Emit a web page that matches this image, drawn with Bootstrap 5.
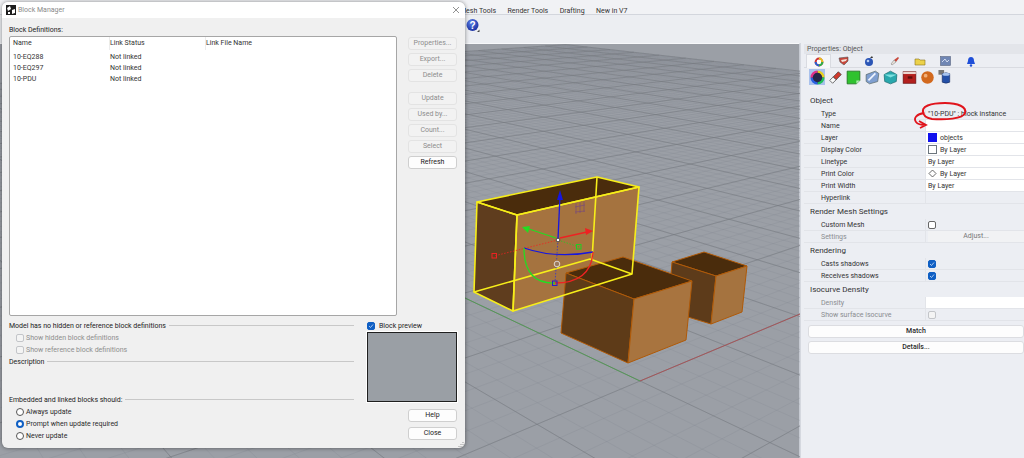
<!DOCTYPE html>
<html lang="en">
<head>
    <meta charset="UTF-8">
    <meta name="viewport" content="width=device-width, initial-scale=1.0">
    <title>Block Manager</title>
    <link href="https://cdn.jsdelivr.net/npm/bootstrap@5.3.2/dist/css/bootstrap.min.css" rel="stylesheet">
    <style>
        html, body { width: 1024px; height: 458px; overflow: hidden; }
        body { background: #eceef2; font-family: Roboto, "Noto Sans", sans-serif; font-size: 7px; line-height: 12px; color: #2b2b2b; position: relative; }

        /* top ribbon */
        .top-strip { height: 43px; background: #eceef2; }
        .tab-line { height: 15px; border-bottom: 1px solid #d3d6dd; padding-left: 460px; gap: 11.5px; background: #f1f2f5; }
        .tab-line span { line-height: 23px; color: #333; white-space: nowrap; }
        .help-row { padding: 3px 0 0 466px; }

        /* main area */
        .main-row { height: 415px; }
        .view-port { width: 800px; background: #9b9fa6; border-top: 1px solid #f7f8fa; border-right: 1px solid #c6cad2; }
        .view-port svg { width: 800px; height: 414px; }

        /* properties panel */
        .prop-panel { width: 224px; padding: 1px 0 0 3px; border-left: 1px solid #d5d8df; background: #eceef3; }
        .prop-title { height: 10px; line-height: 10px; padding-left: 3px; color: #555; background: #e3e5ea; }
        .prop-tabs { height: 14px; border-bottom: 1px solid #d9dbe1; padding-left: 2px; }
        .prop-tabs > div { width: 25.4px; height: 14px; display: flex; align-items: center; justify-content: center; }
        .prop-tabs > div.on { background: #f6f7f9; border: 1px solid #d9dbe1; border-bottom: 0; }
        .prop-icons { height: 25px; gap: 2px; padding: 1px 0 0 5px; align-items: flex-start; }
        .prop-icons > div { width: 16.4px; height: 16px; display: flex; align-items: center; justify-content: center; }
        .prop-icons > div.on { background: #a9c1ec; }
        .prop-icons svg { width: 15px; height: 15px; }
        .prop-head { height: 15px; line-height: 15px; padding-left: 6px; font-size: 8px; color: #333; }
        .prop-row { height: 12px; line-height: 12px; border-bottom: 1px solid #e2e4e9; padding-left: 17px; color: #333; }
        .prop-row .lbl { width: 105px; flex: none; border-right: 1px solid #e2e4e9; }
        .prop-row .val { flex: 1; padding-left: 2px; white-space: nowrap; display: flex; align-items: center; gap: 3px; }
        .val-white { background: #fff; }
        .prop-row.dim { color: #8b8d91; }
        .swatch { width: 9px; height: 9px; flex: none; }
        .adjust-btn { background: #f1f2f4; color: #777; text-align: center; height: 11px; line-height: 11px; }
        .chk { width: 8px; height: 8px; flex: none; border: 1px solid #666; border-radius: 2px; background: #fff; display: inline-flex; align-items: center; justify-content: center; }
        .chk.blue { background: #0f5fc4; border-color: #0f5fc4; }
        .chk.off { border-color: #c3c5c9; background: #f4f4f4; }
        .wide-btn { height: 13px; padding: 0; font-size: 7px; line-height: 11px; font-weight: 500; color: #2b2b2b; background: #fdfdfd; border: 1px solid #dcdde1; border-radius: 3px; width: 100%; display: block; }
        .btn-stack { padding: 4px 0 0 4px; gap: 3px; }

        /* block manager dialog, floats above the app */
        .dlg { position: absolute; left: 2px; top: 2px; width: 463px; height: 446px; background: #f0f0f0; border-radius: 6px; box-shadow: 0 0 4px rgba(0,0,0,.45); overflow: hidden; }
        .dlg-title { height: 16px; background: #fff; padding-left: 4px; gap: 2px; color: #8a8a8a; line-height: 16px; }
        .dlg-x { margin-left: auto; margin-right: 5px; }
        .dlg-body { padding: 6px 8px 0 7px; }
        .dlg-cap { height: 12px; color: #222; }
        .list-box { width: 389px; height: 280px; background: #fff; border: 1px solid #a6a6a6; border-radius: 2px; }
        .list-head, .list-line { padding-left: 3px; color: #333; }
        .list-head { height: 15px; line-height: 13px; }
        .list-head > div { height: 13px; }
        .list-head div:nth-child(1), .list-line div:nth-child(1) { width: 97px; }
        .list-head div:nth-child(2), .list-line div:nth-child(2) { width: 96px; }
        .list-head div:nth-child(-n+2) { border-right: 1px solid #ececec; }
        .list-line { height: 11px; line-height: 11px; }
        .dlg-btns { width: 49px; margin-left: 11px; padding-top: 1px; }
        .dlg-btn { display: block; width: 49px; height: 13px; padding: 0; font-size: 7px; line-height: 11px; margin-bottom: 3px; border: 1px solid #e3e3e3; border-radius: 3px; background: #f2f2f2; color: #8d8d8d; }
        .dlg-btn.live { background: #fdfdfd; color: #222; border-color: #cfcfcf; }
        .dlg-btn.gap-above { margin-top: 10px; }
        .dlg-lower { margin-top: 3px; }
        .group-col { width: 346px; }
        .group-head { height: 13px; gap: 3px; align-items: center; color: #222; white-space: nowrap; }
        .group-head i { flex: 1; height: 1px; background: #c8c8c8; display: block; }
        .desc-head { margin-top: -1px; }
        .opt-line { height: 12px; padding-left: 7px; gap: 2px; align-items: center; white-space: nowrap; }
        .opt-line.off { color: #8e8e8e; }
        .radio-dot { width: 8px; height: 8px; flex: none; border: 1px solid #555; border-radius: 50%; background: #fff; }
        .radio-dot.set { border: 2.5px solid #0f5fc4; }
        .desc-gap { height: 25px; }
        .preview-col { width: 90px; margin-left: 13px; }
        .preview-cap { margin-top: 1px; }
        .preview-box { width: 90px; height: 70px; background: #9a9fa5; border: 1px solid #1f1f1f; outline: 1px solid #fff; margin-bottom: 7px; }
        .close-gap { margin-top: 5px; }
        .dlg-grip { position: absolute; right: 1px; bottom: 1px; }
        .scribble { position: absolute; left: 900px; top: 95px; width: 80px; height: 40px; pointer-events: none; }
    </style>
</head>
<body>
    <!-- ribbon -->
    <div class="top-strip">
        <div class="tab-line d-flex">
            <span>Mesh Tools</span><span>Render Tools</span><span>Drafting</span><span>New in V7</span>
        </div>
        <div class="help-row">
            <svg width="14" height="16" viewBox="0 0 14 16"><defs><radialGradient id="hb" cx=".4" cy=".3" r=".8"><stop offset="0" stop-color="#5a7fe6"/><stop offset="1" stop-color="#14289a"/></radialGradient></defs><circle cx="6.5" cy="7" r="6" fill="url(#hb)"/><text x="6.5" y="10.5" font-size="10" font-weight="700" text-anchor="middle" fill="#fff" font-family="Liberation Sans, sans-serif">?</text><path d="M11 14l2.500 0 0-2.500z" fill="#444"/></svg>
        </div>
    </div>

    <div class="main-row d-flex">
        <!-- 3d viewport -->
        <div class="view-port flex-none">
            <svg id="scene" class="d-block" viewBox="0 44 800 414">
                <g id="gridMinor" fill="none" stroke="#7f848c" stroke-width=".5" stroke-opacity=".4"></g>
                <g id="gridMajor" fill="none" stroke="#74787f" stroke-width=".7" stroke-opacity=".75"></g>
                <path d="M640 381L465 298" stroke="#4f9a4f" stroke-width=".9" fill="none"/>
                <path d="M640 381L800 314" stroke="#a84f52" stroke-width=".9" fill="none"/>

                <!-- selected box, faces -->
                <polygon points="477,202 597,177 639,187 517,215" fill="#4a2c0c"/>
                <polygon points="477,202 517,215 513,311 474,292" fill="#5f3d1e"/>
                <polygon points="517,215 639,187 632,274 513,311" fill="#a5733f"/>

                <!-- far box -->
                <polygon points="672,262 704,252 747,266 716,276" fill="#4a2c0c" stroke="#b05a08" stroke-width="1" stroke-linejoin="round"/>
                <polygon points="672,262 716,276 711,324 668,311" fill="#5d3b1a" stroke="#b05a08" stroke-width="1" stroke-linejoin="round"/>
                <polygon points="716,276 747,266 742,312 711,324" fill="#a5733f" stroke="#b05a08" stroke-width="1" stroke-linejoin="round"/>

                <!-- near box -->
                <polygon points="566,273 623,257 692,281 634,299" fill="#4a2c0c" stroke="#b05a08" stroke-width="1" stroke-linejoin="round"/>
                <polygon points="566,273 634,299 628,363 561,333" fill="#5e3b18" stroke="#b05a08" stroke-width="1" stroke-linejoin="round"/>
                <polygon points="634,299 692,281 686,340 628,363" fill="#a8743f" stroke="#b05a08" stroke-width="1" stroke-linejoin="round"/>

                <!-- selected box, yellow edges -->
                <g fill="none" stroke="#f7ee1a" stroke-width="1.600" stroke-linejoin="round">
                    <polygon points="477,202 597,177 639,187 517,215"/>
                    <polygon points="477,202 517,215 513,311 474,292"/>
                    <polygon points="517,215 639,187 632,274 513,311"/>
                    <path d="M597,177L592,260M474,292L590,259L632,274"/>
                </g>

                <!-- gumball -->
                <path d="M558 240L494 256" stroke="#e22" stroke-width=".8" stroke-dasharray="1.500 1.500"/>
                <path d="M558 240L579 247" stroke="#2c2" stroke-width=".8" stroke-dasharray="1.500 1.500"/>
                <path d="M558 240L555 283" stroke="#33c" stroke-width=".8" stroke-dasharray="1.500 1.500"/>
                <path d="M558 239L560 196" stroke="#1616e0" stroke-width="1.300"/>
                <polygon points="560,190 557,200 563,200" fill="#1616e0"/>
                <path d="M560 238L587 232" stroke="#ee2222" stroke-width="1.300"/>
                <polygon points="593,231 585,228 586,235" fill="#ee2222"/>
                <path d="M556 238L529 229" stroke="#22dd22" stroke-width="1.300"/>
                <polygon points="522,227 530,226 528,233" fill="#22dd22"/>
                <path d="M524 248Q556 259 593 252" stroke="#1616e0" stroke-width="1.300" fill="none"/>
                <path d="M524 248Q524 284 555 283" stroke="#22dd22" stroke-width="1.300" fill="none"/>
                <path d="M593 252Q591 283 555 283" stroke="#ee2222" stroke-width="1.300" fill="none"/>
                <circle cx="558" cy="240" r="1.800" fill="#fff" stroke="#222" stroke-width=".7"/>
                <circle cx="557" cy="264" r="2.800" fill="#9c7a5c" stroke="#eee" stroke-width=".8"/>
                <rect x="492" y="253.500" width="4.500" height="4.500" fill="none" stroke="#e22" stroke-width="1"/>
                <rect x="576.500" y="244.500" width="4.500" height="4.500" fill="none" stroke="#2c2" stroke-width="1"/>
                <rect x="552.500" y="281" width="4.500" height="4.500" fill="none" stroke="#22c" stroke-width="1"/>
                <path d="M576 203L576 214M580 202L580 213M584 201L584 212M575 207L585 205M575 212L585 211" stroke="#7a4a78" stroke-width=".7" fill="none"/>
            </svg>
        </div>

        <!-- properties panel -->
        <div class="prop-panel flex-grow-1">
            <div class="prop-title">Properties: Object</div>
            <div class="prop-tabs d-flex">
                <div class="on"><svg width="10" height="10" viewBox="0 0 10 10"><circle cx="5" cy="5" r="3.400" fill="#fff" stroke="#c33" stroke-width="2"/><path d="M5 1.600A3.400 3.400 0 0 1 8.400 5" fill="none" stroke="#e8c020" stroke-width="2"/><path d="M8.400 5A3.400 3.400 0 0 1 5 8.400" fill="none" stroke="#2bb24a" stroke-width="2"/><path d="M5 8.400A3.400 3.400 0 0 1 1.600 5" fill="none" stroke="#2a5fd0" stroke-width="2"/></svg></div>
                <div><svg width="12" height="10" viewBox="0 0 12 10"><path d="M1 2L10 1 10 5 6 9 2 6z" fill="#c9453a" stroke="#555" stroke-width=".6"/><path d="M3 4L9 3 8 5 4 6z" fill="#f4e6dc"/></svg></div>
                <div><svg width="10" height="11" viewBox="0 0 10 11"><circle cx="5" cy="6" r="4" fill="#2b55b5"/><circle cx="4" cy="5" r="1.300" fill="#b8cdf2"/><path d="M6 2L8 0 9 2z" fill="#333"/></svg></div>
                <div><svg width="10" height="10" viewBox="0 0 10 10"><path d="M8 1L9 2 6 6 4 4z" fill="#c8493c"/><path d="M4 4L6 6 2 9 1 8z" fill="#e9e2da" stroke="#777" stroke-width=".5"/></svg></div>
                <div><svg width="12" height="9" viewBox="0 0 12 9"><path d="M1 2h4l1 1h5v5H1z" fill="#ecd24a" stroke="#8a7420" stroke-width=".6"/></svg></div>
                <div><svg width="11" height="10" viewBox="0 0 11 10"><rect x=".5" y=".5" width="10" height="9" fill="#6f86b4" stroke="#5a6680" stroke-width=".6"/><path d="M2 6L5 3 7 6 9 4" stroke="#e8eefb" stroke-width=".8" fill="none"/></svg></div>
                <div><svg width="10" height="11" viewBox="0 0 10 11"><path d="M5 1Q8 1 8 5L9 8H1L2 5Q2 1 5 1z" fill="#1f4fd8"/><circle cx="5" cy="9.500" r="1.200" fill="#1f4fd8"/></svg></div>
            </div>
            <div class="prop-icons d-flex">
                <div class="on"><svg viewBox="0 0 14 14"><circle cx="7" cy="7" r="5.500" fill="#26264a" stroke="#222" stroke-width=".6"/><path d="M7 1.500A5.500 5.500 0 0 1 12.500 7" fill="none" stroke="#e8d020" stroke-width="2.200"/><path d="M12.500 7A5.500 5.500 0 0 1 7 12.500" fill="none" stroke="#22c05a" stroke-width="2.200"/><path d="M7 12.500A5.500 5.500 0 0 1 1.500 7" fill="none" stroke="#2a5fe0" stroke-width="2.200"/><path d="M1.500 7A5.500 5.500 0 0 1 7 1.500" fill="none" stroke="#e0308a" stroke-width="2.200"/></svg></div>
                <div><svg viewBox="0 0 13 13"><path d="M9 1.500L11.500 4 7 8.500 4.500 6z" fill="#d0392c" stroke="#333" stroke-width=".6"/><path d="M4.500 6L7 8.500 4 11.500 1.500 9z" fill="#fafafa" stroke="#333" stroke-width=".6"/></svg></div>
                <div><svg viewBox="0 0 13 13"><path d="M1 1h11v8l-3 3H1z" fill="#2fc22f" stroke="#1d6d1d" stroke-width=".7"/><path d="M12 9L9 9 9 12z" fill="#b6eeb6"/></svg></div>
                <div><svg viewBox="0 0 13 13"><path d="M1 4L9 1 12 3 11 10 4 12 1 10z" fill="#7f9fd0" stroke="#566" stroke-width=".6"/><path d="M3 9L9 3" stroke="#eef4ff" stroke-width="1.500"/></svg></div>
                <div><svg viewBox="0 0 13 13"><path d="M6.500 1L12 4 11.500 10 6.500 12 1.500 10 1 4z" fill="#29a8ad" stroke="#16656a" stroke-width=".6"/><path d="M1 4L6.500 6.500 12 4" fill="#7de0df"/></svg></div>
                <div><svg viewBox="0 0 13 12"><rect x="1" y="1" width="11" height="10" fill="#b3201e" stroke="#611" stroke-width=".6"/><rect x="1" y="1" width="11" height="2" fill="#ecd5d0"/><rect x="5" y="5" width="4" height="2" fill="#5e0f0e"/></svg></div>
                <div><svg viewBox="0 0 12 12"><circle cx="6" cy="6" r="5" fill="#d2691e"/><circle cx="4.500" cy="4.500" r="1.500" fill="#f1b07a"/></svg></div>
                <div><svg viewBox="0 0 15 16"><rect x="0" y="0" width="6" height="5" fill="#777"/><path d="M4 4Q8 2 12 4V13Q8 15 4 13z" fill="#2450a8" stroke="#14285a" stroke-width=".6"/><ellipse cx="8" cy="4.500" rx="4" ry="1.700" fill="#a8c4ee"/></svg></div>
            </div>

            <div class="prop-head">Object</div>
            <div class="prop-row d-flex"><div class="lbl">Type</div><div class="val">"10-PDU" : block instance</div></div>
            <div class="prop-row d-flex"><div class="lbl">Name</div><div class="val val-white"></div></div>
            <div class="prop-row d-flex"><div class="lbl">Layer</div><div class="val val-white"><span class="swatch" style="background:#1111ee"></span>objects</div></div>
            <div class="prop-row d-flex"><div class="lbl">Display Color</div><div class="val val-white"><span class="swatch bg-white border border-secondary"></span>By Layer</div></div>
            <div class="prop-row d-flex"><div class="lbl">Linetype</div><div class="val val-white">By Layer</div></div>
            <div class="prop-row d-flex"><div class="lbl">Print Color</div><div class="val val-white"><svg width="9" height="9" viewBox="0 0 9 9"><path d="M4.500 1L8 4.500 4.500 8 1 4.500z" fill="#fff" stroke="#444" stroke-width=".8"/></svg>By Layer</div></div>
            <div class="prop-row d-flex"><div class="lbl">Print Width</div><div class="val val-white">By Layer</div></div>
            <div class="prop-row d-flex"><div class="lbl">Hyperlink</div><div class="val"></div></div>

            <div class="prop-head">Render Mesh Settings</div>
            <div class="prop-row d-flex"><div class="lbl">Custom Mesh</div><div class="val"><span class="chk"></span></div></div>
            <div class="prop-row d-flex dim"><div class="lbl">Settings</div><div class="val"><div class="adjust-btn w-100">Adjust...</div></div></div>

            <div class="prop-head">Rendering</div>
            <div class="prop-row d-flex"><div class="lbl">Casts shadows</div><div class="val"><span class="chk blue"><svg width="6" height="6" viewBox="0 0 6 6"><path d="M1 3L2.500 4.500 5 1.500" stroke="#cfe0f8" fill="none" stroke-width=".8"/></svg></span></div></div>
            <div class="prop-row d-flex"><div class="lbl">Receives shadows</div><div class="val"><span class="chk blue"><svg width="6" height="6" viewBox="0 0 6 6"><path d="M1 3L2.500 4.500 5 1.500" stroke="#cfe0f8" fill="none" stroke-width=".8"/></svg></span></div></div>

            <div class="prop-head">Isocurve Density</div>
            <div class="prop-row d-flex dim"><div class="lbl">Density</div><div class="val val-white"></div></div>
            <div class="prop-row d-flex dim"><div class="lbl">Show surface isocurve</div><div class="val"><span class="chk off"></span></div></div>

            <div class="btn-stack d-flex flex-column">
                <button type="button" class="btn wide-btn">Match</button>
                <button type="button" class="btn wide-btn">Details...</button>
            </div>
        </div>
    </div>

    <!-- block manager dialog -->
    <div class="dlg">
        <div class="dlg-title d-flex align-items-center">
            <svg width="10" height="10" viewBox="0 0 10 10"><rect width="10" height="10" fill="#1d1d1d"/><path d="M1 3L4 1 5 4 2 6zM6 5L9 4 9 8 6 9zM2 7L4 7 4 9 2 9z" fill="#fff"/></svg>
            <span>Block Manager</span>
            <svg class="dlg-x" width="8" height="8" viewBox="0 0 8 8"><path d="M1 1L7 7M7 1L1 7" stroke="#777" stroke-width=".8"/></svg>
        </div>
        <div class="dlg-body">
            <div class="dlg-cap">Block Definitions:</div>
            <div class="d-flex">
                <div class="list-box flex-none">
                    <div class="list-head d-flex"><div>Name</div><div>Link Status</div><div>Link File Name</div></div>
                    <div>
                        <div class="list-line d-flex"><div>10-EQ288</div><div>Not linked</div></div>
                        <div class="list-line d-flex"><div>10-EQ297</div><div>Not linked</div></div>
                        <div class="list-line d-flex"><div>10-PDU</div><div>Not linked</div></div>
                    </div>
                </div>
                <div class="dlg-btns">
                    <button type="button" class="btn dlg-btn">Properties...</button>
                    <button type="button" class="btn dlg-btn">Export...</button>
                    <button type="button" class="btn dlg-btn">Delete</button>
                    <button type="button" class="btn dlg-btn gap-above">Update</button>
                    <button type="button" class="btn dlg-btn">Used by...</button>
                    <button type="button" class="btn dlg-btn">Count...</button>
                    <button type="button" class="btn dlg-btn">Select</button>
                    <button type="button" class="btn dlg-btn live">Refresh</button>
                </div>
            </div>
            <div class="d-flex dlg-lower">
                <div class="group-col">
                    <div class="group-head d-flex">Model has no hidden or reference block definitions<i></i></div>
                    <div class="opt-line off d-flex"><span class="chk off"></span>Show hidden block definitions</div>
                    <div class="opt-line off d-flex"><span class="chk off"></span>Show reference block definitions</div>
                    <div class="group-head desc-head d-flex">Description<i></i></div>
                    <div class="desc-gap"></div>
                    <div class="group-head d-flex">Embedded and linked blocks should:<i></i></div>
                    <div class="opt-line d-flex"><span class="radio-dot"></span>Always update</div>
                    <div class="opt-line d-flex"><span class="radio-dot set"></span>Prompt when update required</div>
                    <div class="opt-line d-flex"><span class="radio-dot"></span>Never update</div>
                </div>
                <div class="preview-col">
                    <div class="d-flex align-items-center gap-1 dlg-cap preview-cap"><span class="chk blue"><svg width="6" height="6" viewBox="0 0 6 6"><path d="M1 3L2.500 4.500 5 1.500" stroke="#cfe0f8" fill="none" stroke-width=".8"/></svg></span>Block preview</div>
                    <div class="preview-box"></div>
                    <button type="button" class="btn dlg-btn live ms-auto">Help</button>
                    <button type="button" class="btn dlg-btn live ms-auto close-gap">Close</button>
                </div>
            </div>
        </div>
        <svg class="dlg-grip" width="6" height="6" viewBox="0 0 6 6"><path d="M5 1v1M3 3v1M5 3v1M1 5v1M3 5v1M5 5v1" stroke="#9a9a9a" stroke-width="1"/></svg>
    </div>

    <!-- red hand annotation over the panel -->
    <svg class="scribble" viewBox="900 95 80 40">
        <path d="M924 114C919 106 932 103 945 103C958 103 967 107 965 113C963 119 945 120 932 119C926 118 923 115 923 111" fill="none" stroke="#e0141c" stroke-width="2"/>
        <path d="M924 113C917 114 913 118 916 122C918 125 922 125 926 125M919 121L926 125L920 128" fill="none" stroke="#e0141c" stroke-width="1.800"/>
    </svg>

    <script>
        // perspective floor: world X runs along the red axis, Y along the green axis
        const origin = [640, 381], vpRed = [1611, -27], vpGreen = [-269, -50];
        const a = 0.0959, b = 0.125, extent = 18;

        function project(x, y) {
            const w = x * a + y * b + 1;
            return [(x * a * vpRed[0] + y * b * vpGreen[0] + origin[0]) / w,
                    (x * a * vpRed[1] + y * b * vpGreen[1] + origin[1]) / w];
        }

        function gridPath(step) {
            let d = '';
            const minW = 0.06;
            for (let v = -extent; v <= extent + 0.001; v += step) {
                // clip each line before it passes behind the camera
                let from = Math.max(-extent, (minW - 1 - v * b) / a);
                if (from < extent) {
                    const p = project(from, v), q = project(extent, v);
                    d += `M${p[0].toFixed(1)} ${p[1].toFixed(1)}L${q[0].toFixed(1)} ${q[1].toFixed(1)}`;
                }
                from = Math.max(-extent, (minW - 1 - v * a) / b);
                if (from < extent) {
                    const p = project(v, from), q = project(v, extent);
                    d += `M${p[0].toFixed(1)} ${p[1].toFixed(1)}L${q[0].toFixed(1)} ${q[1].toFixed(1)}`;
                }
            }
            return d;
        }

        const makePath = (id, step) => {
            const el = document.createElementNS('http://www.w3.org/2000/svg', 'path');
            el.setAttribute('d', gridPath(step));
            document.getElementById(id).appendChild(el);
        };
        makePath('gridMinor', 0.2);
        makePath('gridMajor', 1);
    </script>
    <script src="https://cdn.jsdelivr.net/npm/bootstrap@5.3.2/dist/js/bootstrap.bundle.min.js"></script>
</body>
</html>
